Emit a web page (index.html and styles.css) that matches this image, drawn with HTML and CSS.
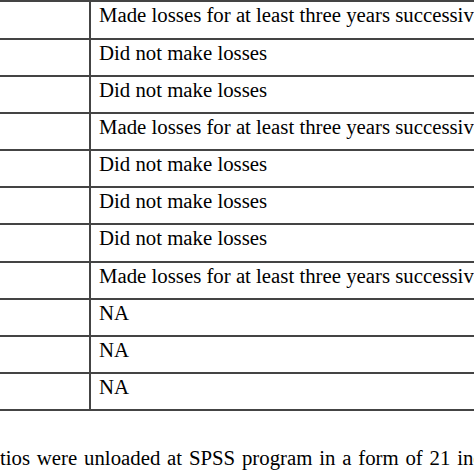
FILE: index.html
```html
<!DOCTYPE html>
<html>
<head>
<meta charset="utf-8">
<link rel="stylesheet" href="styles.css">
</head>
<body>
<div class="page">
  <div class="table">
    <div class="row first"><div class="key"></div><div class="val">Made losses for at least three years successively</div></div>
    <div class="row"><div class="key"></div><div class="val">Did not make losses</div></div>
    <div class="row"><div class="key"></div><div class="val">Did not make losses</div></div>
    <div class="row"><div class="key"></div><div class="val">Made losses for at least three years successively</div></div>
    <div class="row"><div class="key"></div><div class="val">Did not make losses</div></div>
    <div class="row"><div class="key"></div><div class="val">Did not make losses</div></div>
    <div class="row"><div class="key"></div><div class="val">Did not make losses</div></div>
    <div class="row"><div class="key"></div><div class="val">Made losses for at least three years successively</div></div>
    <div class="row"><div class="key"></div><div class="val">NA</div></div>
    <div class="row"><div class="key"></div><div class="val">NA</div></div>
    <div class="row"><div class="key"></div><div class="val">NA</div></div>
  </div>
  <p class="note">tios were unloaded at SPSS program in a form of 21 independent</p>
</div>
</body>
</html>
```
FILE: styles.css
```css
html, body {
  margin: 0;
  padding: 0;
  background: #ffffff;
  overflow: hidden;
}
.page {
  width: 474px;
  height: 474px;
  overflow: hidden;
  font-family: "Liberation Serif", "Times New Roman", serif;
  font-size: 20.8px;
  color: #000;
}
.table {
  display: flex;
  flex-direction: column;
  width: 700px;
  border-top: 2px solid #444;
}
.row {
  display: flex;
  box-sizing: border-box;
  height: 37.2px;
  border-bottom: 2px solid #444;
}
.row.first {
  height: 37.5px;
}
.key {
  width: 89px;
  flex: none;
  border-right: 2px solid #444;
}
.val {
  padding: 1px 0 0 8px;
  white-space: nowrap;
}
.note {
  margin: 35px 0 0 0;
  white-space: nowrap;
  word-spacing: 1.6px;
}
```
